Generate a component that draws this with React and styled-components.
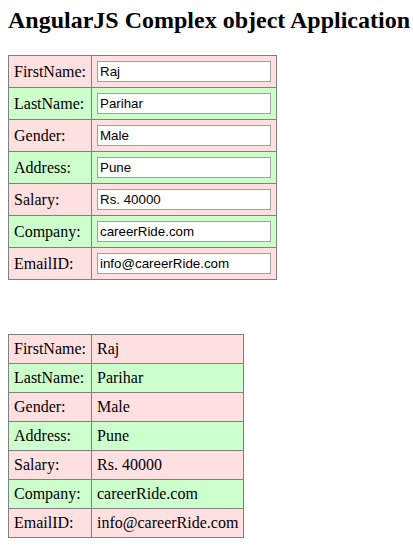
import React from "react";
import styled, { createGlobalStyle } from "styled-components";

const Global = createGlobalStyle`
  html, body { margin: 0; padding: 0; background: #ffffff; }
  body { font-family: "Liberation Serif", "Times New Roman", serif; color: #000; }
`;

const Page = styled.div`
  padding: 0 8px;
`;

const Title = styled.h2`
  margin: 6px 0 21px;
  font-family: "Liberation Serif", "Times New Roman", serif;
  font-size: 24px;
  line-height: 28px;
  font-weight: bold;
  white-space: nowrap;
`;

const Table = styled.table`
  border-collapse: collapse;
  border: 1px solid #808080;
  margin-top: ${(p) => p.$gap || 0}px;
`;

const Row = styled.tr`
  background: ${(p) => (p.$alt ? "#ccffcc" : "#ffe0e0")};
`;

const Cell = styled.td`
  border: 1px solid #808080;
  padding: ${(p) => (p.$input ? "5px 5px 5px 5px" : "5px")};
  font-size: 16px;
  line-height: ${(p) => (p.$tall ? "21px" : "18px")};
  white-space: nowrap;
  vertical-align: middle;
`;

const Input = styled.input`
  display: block;
  box-sizing: border-box;
  width: 174px;
  height: 21px;
  margin: 0;
  padding: 0 2px;
  border: 1px solid #a0a0a0;
  background: #fff;
  font-family: "Liberation Sans", Arial, sans-serif;
  font-size: 13.33px;
  color: #000;
  outline: none;
`;

const person = [
  ["FirstName:", "Raj"],
  ["LastName:", "Parihar"],
  ["Gender:", "Male"],
  ["Address:", "Pune"],
  ["Salary:", "Rs. 40000"],
  ["Company:", "careerRide.com"],
  ["EmailID:", "info@careerRide.com"],
];

export default function App() {
  return (
    <>
      <Global />
      <Page>
        <Title>AngularJS Complex object Application</Title>
        <Table>
          <tbody>
            {person.map(([label, value], i) => (
              <Row key={label} $alt={i % 2 === 1}>
                <Cell $tall>{label}</Cell>
                <Cell $tall $input>
                  <Input defaultValue={value} />
                </Cell>
              </Row>
            ))}
          </tbody>
        </Table>
        <Table $gap={54}>
          <tbody>
            {person.map(([label, value], i) => (
              <Row key={label} $alt={i % 2 === 1}>
                <Cell>{label}</Cell>
                <Cell>{value}</Cell>
              </Row>
            ))}
          </tbody>
        </Table>
      </Page>
    </>
  );
}
